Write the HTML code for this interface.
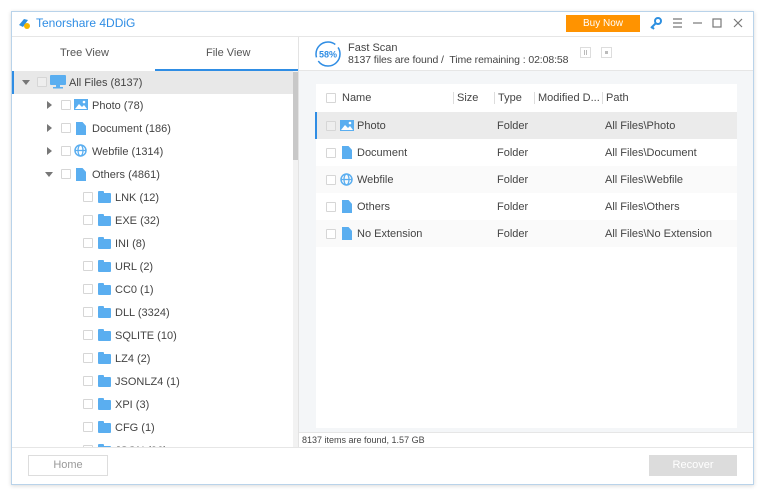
<!DOCTYPE html><html><head><meta charset="utf-8"><style>
*{margin:0;padding:0;box-sizing:border-box}
body{width:768px;height:497px;background:#fff;font-family:"Liberation Sans",sans-serif;font-size:11px;color:#444;position:relative;overflow:hidden}
.a{position:absolute}
.win{left:11px;top:11px;width:743px;height:474px;border:1px solid #b9d3ea;box-shadow:0 1px 4px rgba(0,0,0,.15);background:#fff}
.cb{position:absolute;width:10px;height:10px;border:1px solid #d6d6d6;background:#fff;border-radius:1px}
.tx{position:absolute;white-space:nowrap;line-height:14px}
.fold{position:absolute;width:13px;height:10px;background:#5aaef0;border-radius:1px}
.fold:before{content:"";position:absolute;left:0;top:-2px;width:6px;height:3px;background:#5aaef0;border-radius:1px 1px 0 0}
.doc{position:absolute;width:10px;height:13px;background:#5aaef0;clip-path:polygon(0 0,65% 0,100% 30%,100% 100%,0 100%)}
.arr{position:absolute;width:0;height:0;border-top:4px solid transparent;border-bottom:4px solid transparent;border-left:5px solid #777}
.arrd{position:absolute;width:0;height:0;border-left:4px solid transparent;border-right:4px solid transparent;border-top:5px solid #777}
</style></head><body>
<div class="a win"></div>
<div class="a" style="left:12px;top:36px;width:741px;height:1px;background:#e6e6e6"></div>
<svg class="a" style="left:17px;top:16px" width="14" height="14" viewBox="0 0 14 14"><path d="M2 9 L7 3 L11 4 L6 11 Z" fill="#2d8fe0"/><circle cx="10" cy="10" r="3" fill="#f5b700"/></svg>
<div class="tx" style="left:36px;top:16px;font-size:12px;color:#2f8de4">Tenorshare 4DDiG</div>
<div class="a" style="left:566px;top:15px;width:74px;height:17px;background:#ff9300;color:#fff;font-size:10px;text-align:center;line-height:17px">Buy Now</div>
<svg class="a" style="left:649px;top:16px" width="14" height="14" viewBox="0 0 14 14"><circle cx="9" cy="5" r="3" fill="none" stroke="#2d8fe0" stroke-width="2"/><path d="M7 7 L2 12 M3 11 L5 13" stroke="#2d8fe0" stroke-width="2"/></svg>
<svg class="a" style="left:671px;top:16px" width="75" height="14" viewBox="0 0 75 14"><path d="M2 3H11M2 7H11M2 11H11" stroke="#777" stroke-width="1.2"/><path d="M22 7H31" stroke="#777" stroke-width="1.2"/><rect x="42" y="3" width="8" height="8" fill="none" stroke="#777" stroke-width="1.2"/><path d="M63 3L71 11M71 3L63 11" stroke="#777" stroke-width="1.2"/></svg>
<div class="tx" style="left:60px;top:46px;color:#555">Tree View</div>
<div class="tx" style="left:206px;top:46px;color:#555">File View</div>
<div class="a" style="left:155px;top:69px;width:143px;height:2px;background:#2f8de4"></div>
<div class="a" style="left:298px;top:37px;width:1px;height:410px;background:#e3e3e3"></div>
<div class="a" style="left:12px;top:71px;width:281px;height:23px;background:#e8e8e8"></div>
<div class="a" style="left:12px;top:71px;width:2px;height:23px;background:#2f8de4"></div>
<div class="a" style="left:293px;top:71px;width:5px;height:376px;background:#f2f2f2"></div>
<div class="a" style="left:293px;top:72px;width:5px;height:88px;background:#c8c8c8"></div>
<div class="arrd" style="left:22px;top:80px"></div><div class="cb" style="left:37px;top:77px;background:#eee"></div>
<svg class="a" style="left:50px;top:75px" width="16" height="14"><rect x="0" y="0" width="16" height="10" rx="1" fill="#5aaef0"/><rect x="6" y="10" width="4" height="2" fill="#5aaef0"/><rect x="3" y="12" width="10" height="1.5" fill="#5aaef0"/></svg>
<div class="tx" style="left:69px;top:76px">All Files (8137)</div>
<div class="arr" style="left:47px;top:101px"></div><div class="cb" style="left:61px;top:100px"></div>
<svg class="a" style="left:74px;top:99px" width="14" height="11"><rect width="14" height="11" fill="#5aaef0"/><path d="M1 10 L5 5 L8 8 L10 6 L13 10Z" fill="#fff"/><circle cx="10" cy="3" r="1.3" fill="#fff"/></svg>
<div class="tx" style="left:92px;top:99px">Photo (78)</div>
<div class="arr" style="left:47px;top:124px"></div><div class="cb" style="left:61px;top:123px"></div><div class="doc" style="left:76px;top:122px"></div>
<div class="tx" style="left:92px;top:122px">Document (186)</div>
<div class="arr" style="left:47px;top:147px"></div><div class="cb" style="left:61px;top:146px"></div>
<svg class="a" style="left:74px;top:144px" width="13" height="13"><circle cx="6.5" cy="6.5" r="5.5" fill="none" stroke="#5aaef0" stroke-width="1.5"/><ellipse cx="6.5" cy="6.5" rx="2.5" ry="5.5" fill="none" stroke="#5aaef0" stroke-width="1.3"/><path d="M1 6.5H12" stroke="#5aaef0" stroke-width="1.3"/></svg>
<div class="tx" style="left:92px;top:145px">Webfile (1314)</div>
<div class="arrd" style="left:45px;top:172px"></div><div class="cb" style="left:61px;top:169px"></div><div class="doc" style="left:76px;top:168px"></div>
<div class="tx" style="left:92px;top:168px">Others (4861)</div>
<div class="cb" style="left:83px;top:192px"></div><div class="fold" style="left:98px;top:193px"></div><div class="tx" style="left:115px;top:191px">LNK (12)</div>
<div class="cb" style="left:83px;top:215px"></div><div class="fold" style="left:98px;top:216px"></div><div class="tx" style="left:115px;top:214px">EXE (32)</div>
<div class="cb" style="left:83px;top:238px"></div><div class="fold" style="left:98px;top:239px"></div><div class="tx" style="left:115px;top:237px">INI (8)</div>
<div class="cb" style="left:83px;top:261px"></div><div class="fold" style="left:98px;top:262px"></div><div class="tx" style="left:115px;top:260px">URL (2)</div>
<div class="cb" style="left:83px;top:284px"></div><div class="fold" style="left:98px;top:285px"></div><div class="tx" style="left:115px;top:283px">CC0 (1)</div>
<div class="cb" style="left:83px;top:307px"></div><div class="fold" style="left:98px;top:308px"></div><div class="tx" style="left:115px;top:306px">DLL (3324)</div>
<div class="cb" style="left:83px;top:330px"></div><div class="fold" style="left:98px;top:331px"></div><div class="tx" style="left:115px;top:329px">SQLITE (10)</div>
<div class="cb" style="left:83px;top:353px"></div><div class="fold" style="left:98px;top:354px"></div><div class="tx" style="left:115px;top:352px">LZ4 (2)</div>
<div class="cb" style="left:83px;top:376px"></div><div class="fold" style="left:98px;top:377px"></div><div class="tx" style="left:115px;top:375px">JSONLZ4 (1)</div>
<div class="cb" style="left:83px;top:399px"></div><div class="fold" style="left:98px;top:400px"></div><div class="tx" style="left:115px;top:398px">XPI (3)</div>
<div class="cb" style="left:83px;top:422px"></div><div class="fold" style="left:98px;top:423px"></div><div class="tx" style="left:115px;top:421px">CFG (1)</div>
<div class="cb" style="left:83px;top:445px"></div><div class="fold" style="left:98px;top:446px"></div><div class="tx" style="left:115px;top:444px">JSON (96)</div>
<div class="a" style="left:12px;top:447px;width:741px;height:37px;background:#fff"></div>
<div class="a" style="left:299px;top:71px;width:454px;height:376px;background:#f4f6f8"></div>
<div class="a" style="left:299px;top:70px;width:454px;height:1px;background:#e6e6e6"></div>
<svg class="a" style="left:314px;top:40px" width="28" height="28"><circle cx="14" cy="14" r="12" fill="none" stroke="#2f8de4" stroke-width="1.5" stroke-dasharray="30 4 30 4"/><text x="14" y="17.5" font-size="9" font-weight="bold" fill="#2f8de4" text-anchor="middle" font-family="Liberation Sans">58%</text></svg>
<div class="tx" style="left:348px;top:41px;color:#444">Fast Scan</div>
<div class="tx" style="left:348px;top:53px;color:#444;font-size:10.5px;letter-spacing:-0.1px">8137 files are found /&nbsp; Time remaining : 02:08:58</div>
<div class="a" style="left:580px;top:47px;width:11px;height:11px;border:1px solid #ddd"></div>
<div class="a" style="left:584px;top:50px;width:1px;height:5px;background:#bbb"></div><div class="a" style="left:586px;top:50px;width:1px;height:5px;background:#bbb"></div>
<div class="a" style="left:601px;top:47px;width:11px;height:11px;border:1px solid #ddd"></div>
<div class="a" style="left:605px;top:51px;width:3px;height:3px;background:#bbb"></div>
<div class="a" style="left:316px;top:84px;width:421px;height:344px;background:#fff"></div>
<div class="cb" style="left:326px;top:93px"></div>
<div class="tx" style="left:342px;top:91px">Name</div>
<div class="a" style="left:453px;top:92px;width:1px;height:12px;background:#ddd"></div><div class="tx" style="left:457px;top:91px">Size</div>
<div class="a" style="left:494px;top:92px;width:1px;height:12px;background:#ddd"></div><div class="tx" style="left:498px;top:91px">Type</div>
<div class="a" style="left:534px;top:92px;width:1px;height:12px;background:#ddd"></div><div class="tx" style="left:538px;top:91px">Modified D...</div>
<div class="a" style="left:602px;top:92px;width:1px;height:12px;background:#ddd"></div><div class="tx" style="left:606px;top:91px">Path</div>
<div class="a" style="left:316px;top:112px;width:421px;height:27px;background:#ebebeb"></div>
<div class="a" style="left:315px;top:112px;width:2px;height:27px;background:#2f8de4"></div>
<div class="a" style="left:316px;top:166px;width:421px;height:27px;background:#fafafa"></div>
<div class="a" style="left:316px;top:220px;width:421px;height:27px;background:#fafafa"></div>
<div class="cb" style="left:326px;top:121px;background:#eee"></div>
<svg class="a" style="left:340px;top:120px" width="14" height="11"><rect width="14" height="11" fill="#5aaef0"/><path d="M1 10 L5 5 L8 8 L10 6 L13 10Z" fill="#fff"/><circle cx="10" cy="3" r="1.3" fill="#fff"/></svg>
<div class="tx" style="left:357px;top:119px">Photo</div><div class="tx" style="left:497px;top:119px">Folder</div><div class="tx" style="left:605px;top:119px">All Files\Photo</div>
<div class="cb" style="left:326px;top:148px"></div><div class="doc" style="left:342px;top:146px"></div>
<div class="tx" style="left:357px;top:146px">Document</div><div class="tx" style="left:497px;top:146px">Folder</div><div class="tx" style="left:605px;top:146px">All Files\Document</div>
<div class="cb" style="left:326px;top:175px"></div>
<svg class="a" style="left:340px;top:173px" width="13" height="13"><circle cx="6.5" cy="6.5" r="5.5" fill="none" stroke="#5aaef0" stroke-width="1.5"/><ellipse cx="6.5" cy="6.5" rx="2.5" ry="5.5" fill="none" stroke="#5aaef0" stroke-width="1.3"/><path d="M1 6.5H12" stroke="#5aaef0" stroke-width="1.3"/></svg>
<div class="tx" style="left:357px;top:173px">Webfile</div><div class="tx" style="left:497px;top:173px">Folder</div><div class="tx" style="left:605px;top:173px">All Files\Webfile</div>
<div class="cb" style="left:326px;top:202px"></div><div class="doc" style="left:342px;top:200px"></div>
<div class="tx" style="left:357px;top:200px">Others</div><div class="tx" style="left:497px;top:200px">Folder</div><div class="tx" style="left:605px;top:200px">All Files\Others</div>
<div class="cb" style="left:326px;top:229px"></div><div class="doc" style="left:342px;top:227px"></div>
<div class="tx" style="left:357px;top:227px">No Extension</div><div class="tx" style="left:497px;top:227px">Folder</div><div class="tx" style="left:605px;top:227px">All Files\No Extension</div>
<div class="a" style="left:299px;top:432px;width:454px;height:15px;background:#fff;border-top:1px solid #e6e6e6"></div>
<div class="tx" style="left:302px;top:433px;font-size:9px">8137 items are found, 1.57 GB</div>
<div class="a" style="left:12px;top:447px;width:741px;height:1px;background:#e6e6e6"></div>
<div class="a" style="left:28px;top:455px;width:80px;height:21px;border:1px solid #ddd;color:#999;text-align:center;line-height:19px">Home</div>
<div class="a" style="left:649px;top:455px;width:88px;height:21px;background:#dcdcdc;color:#fff;text-align:center;line-height:21px">Recover</div>
</body></html>
